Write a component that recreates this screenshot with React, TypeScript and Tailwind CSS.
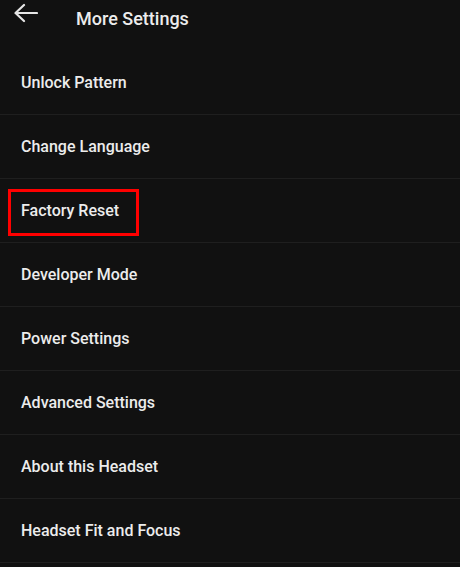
import React from "react";

const items = [
  "Unlock Pattern",
  "Change Language",
  "Factory Reset",
  "Developer Mode",
  "Power Settings",
  "Advanced Settings",
  "About this Headset",
  "Headset Fit and Focus",
];

export default function App() {
  return (
    <div
      className="w-[460px] h-[567px] bg-[#111111] overflow-hidden text-[#ececec]"
      style={{ fontFamily: "Roboto, 'Noto Sans', sans-serif" }}
    >
      <div className="h-[51px] flex items-start">
        <div className="w-[76px] pl-[13px] pt-[3px]">
          <svg width="25" height="20" viewBox="0 0 25 20" fill="none">
            <path
              d="M24 10H3M11 2L2.5 10L11 18"
              stroke="#e6e6e6"
              strokeWidth="2.2"
              strokeLinecap="round"
              strokeLinejoin="round"
            />
          </svg>
        </div>
        <div className="pt-[7px] text-[18px] font-medium leading-[24px]">More Settings</div>
      </div>
      {items.map((t) => (
        <div
          key={t}
          className="h-[64px] border-b border-[#1f1f1f] flex items-center pl-[21px] relative"
        >
          {t === "Factory Reset" && (
            <div className="absolute left-[8px] top-[10px] w-[131px] h-[47px] border-[3px] border-[#ff0000]" />
          )}
          <span className="text-[16px] font-medium leading-none">{t}</span>
        </div>
      ))}
    </div>
  );
}
